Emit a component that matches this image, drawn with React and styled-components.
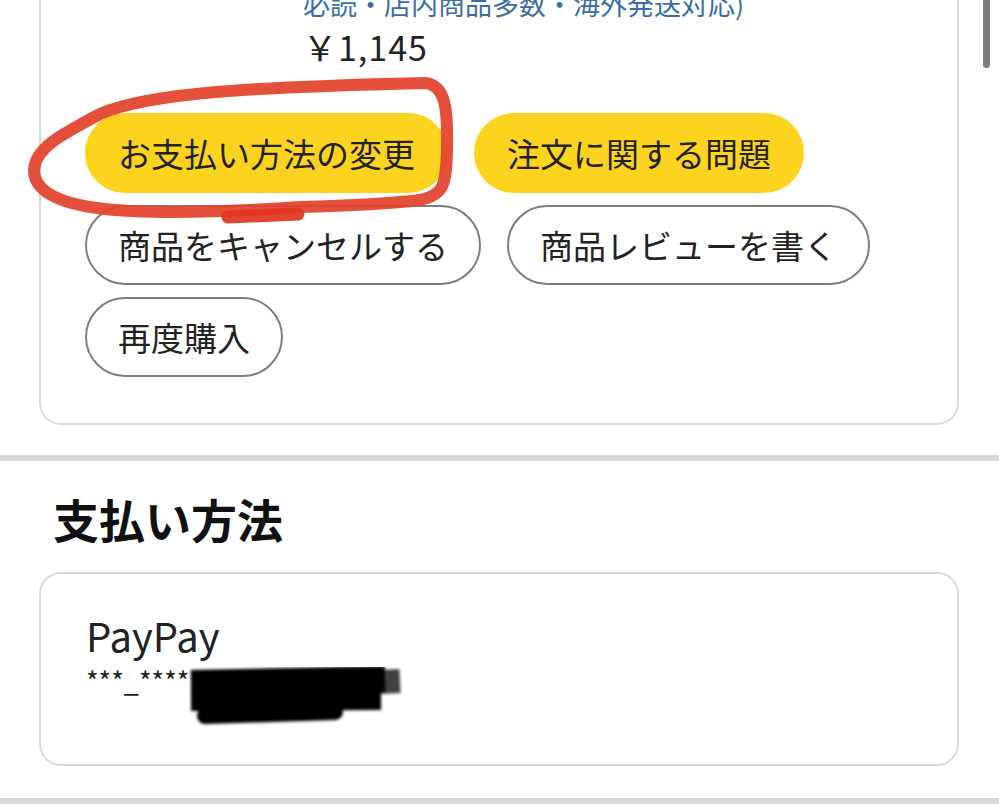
import styled, { createGlobalStyle } from 'styled-components'

const GlobalStyle = createGlobalStyle`
  html, body {
    margin: 0;
    padding: 0;
    background: #ffffff;
    overflow: hidden;
  }
  body {
    font-family: "Noto Sans CJK JP", "Noto Sans", sans-serif;
    color: #222222;
  }
`

const Page = styled.div`
  position: relative;
  width: 999px;
  height: 806px;
  overflow: hidden;
`

const Inner = styled.div`
  padding: 0 40px 0 39px;
`

const Card = styled.div`
  border: 2px solid #d6dada;
  border-radius: 22px;
  background: #ffffff;
  padding: ${(props) => props.$padding};
  ${(props) => props.$openTop && 'border-top: none; border-top-left-radius: 0; border-top-right-radius: 0;'}
  margin-top: ${(props) => props.$marginTop || '0'};
`

const ItemInfo = styled.div`
  margin-left: 218px;
`

const ItemTitle = styled.div`
  font-size: 27px;
  line-height: 38px;
  color: #3a6ea3;
  white-space: nowrap;
`

const Price = styled.div`
  font-size: 34px;
  line-height: 44px;
  margin-top: 2px;
  letter-spacing: 1px;
  color: #222222;
`

const ButtonGroup = styled.div`
  display: flex;
  flex-wrap: wrap;
  gap: 12px 26px;
  margin-top: 44px;
`

const Pill = styled.button`
  box-sizing: border-box;
  height: 80px;
  padding: 0 31px;
  border-radius: 40px;
  font-family: "Noto Sans CJK JP", sans-serif;
  font-size: 33px;
  line-height: 1;
  color: #222222;
  cursor: pointer;
  background: ${(props) => (props.$primary ? '#fcd41f' : '#ffffff')};
  border: 2px solid ${(props) => (props.$primary ? '#fcd41f' : '#7d7d7d')};
`

const Divider = styled.div`
  height: 6px;
  background: #d5d9d9;
  margin-top: ${(props) => props.$marginTop};
`

const SectionTitle = styled.h2`
  margin: 27px 0 0 14px;
  font-size: 46px;
  line-height: 60px;
  font-weight: 700;
  color: #111111;
`

const MethodName = styled.div`
  font-size: 40px;
  line-height: 44px;
  color: #222222;
`

const MaskedRow = styled.div`
  display: flex;
  align-items: flex-start;
  margin-top: 10px;
`

const MaskedNumber = styled.span`
  font-size: 27px;
  line-height: 28px;
  color: #222222;
`

const RedactionMark = styled.svg`
  flex: none;
  margin-top: -1px;
`

const Annotation = styled.svg`
  position: absolute;
  top: 0;
  left: 0;
  pointer-events: none;
`

const Scrollbar = styled.div`
  position: absolute;
  top: 0;
  right: 9px;
  width: 7px;
  height: 68px;
  border-radius: 0 0 4px 4px;
  background: #7e7e7e;
`

function Redaction() {
  return (
    <RedactionMark width="220" height="62" viewBox="0 0 220 62">
      <defs>
        <filter id="soft" x="-10%" y="-30%" width="120%" height="160%">
          <feGaussianBlur stdDeviation="1.4" />
        </filter>
      </defs>
      <g filter="url(#soft)" stroke="#000" strokeLinecap="round" fill="none">
        <path d="M2 17 L196 13" strokeWidth="26" strokeLinecap="butt" />
        <path d="M190 16 L211 15" strokeWidth="24" strokeOpacity="0.75" strokeLinecap="butt" />
        <path d="M2 33 L192 32" strokeWidth="24" strokeLinecap="butt" />
        <path d="M16 50 L146 46" strokeWidth="16" />
      </g>
    </RedactionMark>
  )
}

export default function App() {
  return (
    <>
      <GlobalStyle />
      <Page>
        <Inner>
          <Card $openTop $marginTop="-15px" $padding="0 44px 46px 44px">
            <ItemInfo>
              <ItemTitle>必読・店内商品多数・海外発送対応)</ItemTitle>
              <Price>￥1,145</Price>
            </ItemInfo>
            <ButtonGroup>
              <Pill $primary>お支払い方法の変更</Pill>
              <Pill $primary>注文に関する問題</Pill>
              <Pill>商品をキャンセルする</Pill>
              <Pill>商品レビューを書く</Pill>
              <Pill>再度購入</Pill>
            </ButtonGroup>
          </Card>
        </Inner>

        <Divider $marginTop="30px" />

        <Inner>
          <SectionTitle>支払い方法</SectionTitle>
          <Card $marginTop="24px" $padding="39px 45px 36px 45px">
            <MethodName>PayPay</MethodName>
            <MaskedRow>
              <MaskedNumber>***_****</MaskedNumber>
              <Redaction />
            </MaskedRow>
          </Card>
        </Inner>

        <Divider $marginTop="32px" />

        <Annotation width="999" height="240" viewBox="0 0 999 240">
          <g stroke="#e3412b" strokeOpacity="0.92" fill="none" strokeLinecap="round" strokeLinejoin="round">
            <path
              d="M300 207 C 230 212, 150 214, 105 209 C 60 204, 34 192, 34 170 C 35 148, 62 134, 100 114 C 150 92, 260 87, 424 83 C 446 84, 448 110, 447 150 C 446 185, 444 195, 420 200 C 380 205, 340 206, 300 207"
              strokeWidth="12"
            />
            <path d="M228 217 L298 214" strokeWidth="13" stroke="#e1341f" />
          </g>
        </Annotation>
        <Scrollbar />
      </Page>
    </>
  )
}
